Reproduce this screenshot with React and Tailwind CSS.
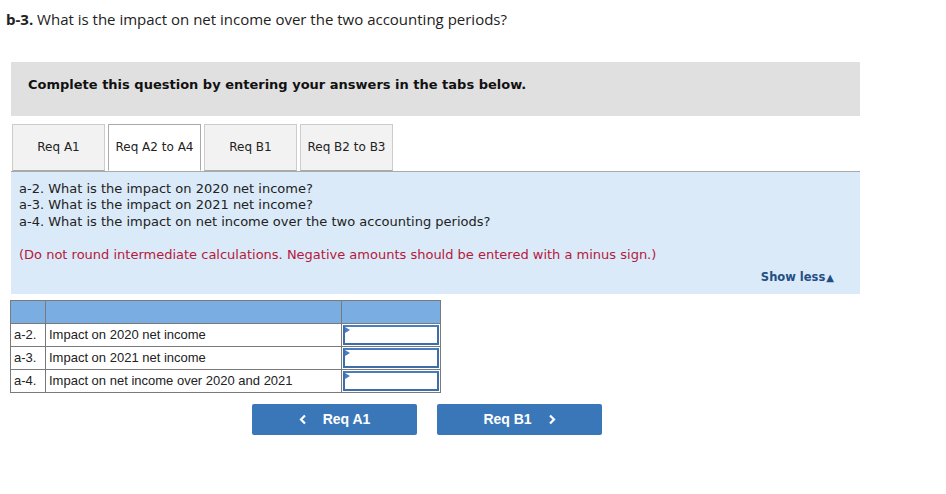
const verdana = { fontFamily: '"DejaVu Sans", Verdana, sans-serif' };

function Tab({ label, active }) {
  return (
    <div
      className={`w-[93px] h-[47px] flex items-center justify-center text-[12px] text-[#222] border ${
        active ? "bg-white border-[#aaa] border-b-white -mb-px z-10" : "bg-[#f2f2f2] border-[#ccc] border-b-[#aaa]"
      }`}
    >
      {label}
    </div>
  );
}

function Row({ code, label }) {
  return (
    <div className="flex h-[23px] border-t border-[#7a7a7a]">
      <div className="w-[35px] pl-[3px] flex items-center text-[13px] text-[#222] border-r border-[#7a7a7a]">{code}</div>
      <div className="w-[296px] pl-[3px] flex items-center text-[13px] text-[#222] border-r border-[#7a7a7a]">{label}</div>
      <div className="w-[98px] p-[1px]">
        <div className="relative h-full border-2 border-[#3d6ea8] border-t-[#4a7cc0] bg-white">
          <span className="absolute left-0 top-0 w-0 h-0 border-y-[3px] border-y-transparent border-l-[5px] border-l-[#4a7cc0]" />
        </div>
      </div>
    </div>
  );
}

export default function App() {
  return (
    <div className="w-[946px] h-[494px] bg-white relative" style={{ fontFamily: '"Liberation Sans", Arial, sans-serif' }}>
      <div className="pl-[6px] pt-[8px] text-[15px] text-[#222]" style={{ fontFamily: '"Open Sans", "Liberation Sans", sans-serif' }}>
        <span className="font-bold">b-3.</span> What is the impact on net income over the two accounting periods?
      </div>

      <div className="ml-[11px] mt-[31px] w-[849px] h-[54px] bg-[#e0e0e0] pt-[15px] pl-[17px] text-[13px] leading-[16px] font-bold text-[#111]" style={verdana}>
        Complete this question by entering your answers in the tabs below.
      </div>

      <div className="ml-[12px] mt-[8px] flex gap-[3px] relative" style={verdana}>
        <Tab label="Req A1" />
        <Tab label="Req A2 to A4" active />
        <Tab label="Req B1" />
        <Tab label="Req B2 to B3" />
      </div>

      <div className="ml-[11px] w-[849px] h-[123px] bg-[#dbeaf8] border-t border-[#aaa] pl-[8px] pt-[9px] relative" style={verdana}>
        <div className="text-[13px] leading-[16.5px] text-[#222]">
          <div>a-2. What is the impact on 2020 net income?</div>
          <div>a-3. What is the impact on 2021 net income?</div>
          <div>a-4. What is the impact on net income over the two accounting periods?</div>
        </div>
        <div className="mt-[15px] text-[13px] text-[#b5193c]">
          (Do not round intermediate calculations. Negative amounts should be entered with a minus sign.)
        </div>
        <div className="absolute right-[26px] bottom-[7px] text-[11.5px] font-bold text-[#234f86] flex items-center">
          Show less<span className="text-[10px] ml-[1px]">▲</span>
        </div>
      </div>

      <div className="ml-[10px] mt-[6px] w-[431px] border border-[#7a7a7a]">
        <div className="flex h-[22px] bg-[#7aaee3]">
          <div className="w-[35px] border-r border-[#7a7a7a]" />
          <div className="w-[296px] border-r border-[#7a7a7a]" />
          <div className="w-[98px]" />
        </div>
        <Row code="a-2." label="Impact on 2020 net income" />
        <Row code="a-3." label="Impact on 2021 net income" />
        <Row code="a-4." label="Impact on net income over 2020 and 2021" />
      </div>

      <div className="ml-[252px] mt-[11px] flex gap-[20px]">
        <button className="w-[165px] h-[31px] bg-[#3a77b9] rounded-[2px] text-white text-[14px] font-bold flex items-center justify-center gap-[16px]">
          <svg width="8" height="11" viewBox="0 0 8 11"><path d="M6 1.5 L2 5.5 L6 9.5" stroke="white" strokeWidth="2.2" fill="none" /></svg>
          Req A1
        </button>
        <button className="w-[165px] h-[31px] bg-[#3a77b9] rounded-[2px] text-white text-[14px] font-bold flex items-center justify-center gap-[16px]">
          Req B1
          <svg width="8" height="11" viewBox="0 0 8 11"><path d="M2 1.5 L6 5.5 L2 9.5" stroke="white" strokeWidth="2.2" fill="none" /></svg>
        </button>
      </div>
    </div>
  );
}
